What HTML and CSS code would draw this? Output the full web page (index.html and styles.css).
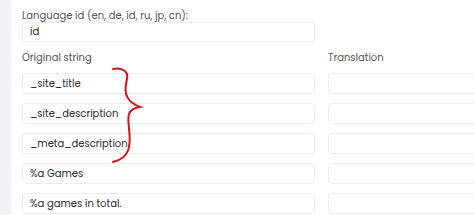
FILE: index.html
```html
<!DOCTYPE html>
<html lang="en">
  <head>
    <meta charset="UTF-8" />
    <meta name="viewport" content="width=device-width, initial-scale=1.0" />
    <title>Translations</title>
    <link rel="stylesheet" href="styles.css">
  </head>
  <body>
    <div class="panel">
      <label class="field-label" for="langId">Language id (en, de, id, ru, jp, cn):</label>
      <input class="field lang-input" id="langId" type="text" value="id" />

      <div class="strings">
        <div class="field-label">Original string</div>
        <div class="field-label">Translation</div>

        <input class="field" type="text" value="_site_title" readonly />
        <input class="field" type="text" />
        <input class="field" type="text" value="_site_description" readonly />
        <input class="field" type="text" />
        <input class="field" type="text" value="_meta_description" readonly />
        <input class="field" type="text" />
        <input class="field" type="text" value="%a Games" readonly />
        <input class="field" type="text" />
        <input class="field" type="text" value="%a games in total." readonly />
        <input class="field" type="text" />
      </div>

      <svg class="brace" width="40" height="100" viewBox="0 0 40 100">
        <path d="M5 3 C13 1 21 5 19 13 C17 22 14 34 32 41 C18 43 20 52 21 62 C23 80 22 92 5 96" />
      </svg>
    </div>
  </body>
</html>
```

FILE: styles.css
```css
body {
  margin: 0;
  background-color: #f2f3f8;
  font-family: Poppins, "DejaVu Sans", sans-serif;
  overflow: hidden;
  height: 215px;
}

.panel {
  position: relative;
  margin-left: 11px;
  padding: 9px 0 0 11px;
  background-color: white;
  height: 215px;
  box-sizing: border-box;
}

.field-label {
  display: block;
  font-size: 10px;
  line-height: 13px;
  color: #555;
}

.field {
  display: block;
  box-sizing: border-box;
  width: 100%;
  height: 21px;
  margin: 0;
  padding: 0 7px;
  border: 1px solid #ececec;
  border-radius: 4px;
  background: white;
  font-family: inherit;
  font-size: 10px;
  color: #2b2b2b;
  outline: none;
}

.lang-input {
  width: 293px;
  height: 20px;
}

.strings {
  display: grid;
  grid-template-columns: 293px 150px;
  column-gap: 13px;
  row-gap: 9px;
  margin-top: 9px;
}

.brace {
  position: absolute;
  left: 97px;
  top: 66px;
}

.brace path {
  fill: none;
  stroke: #d3121c;
  stroke-width: 2;
  stroke-linecap: round;
}
```
